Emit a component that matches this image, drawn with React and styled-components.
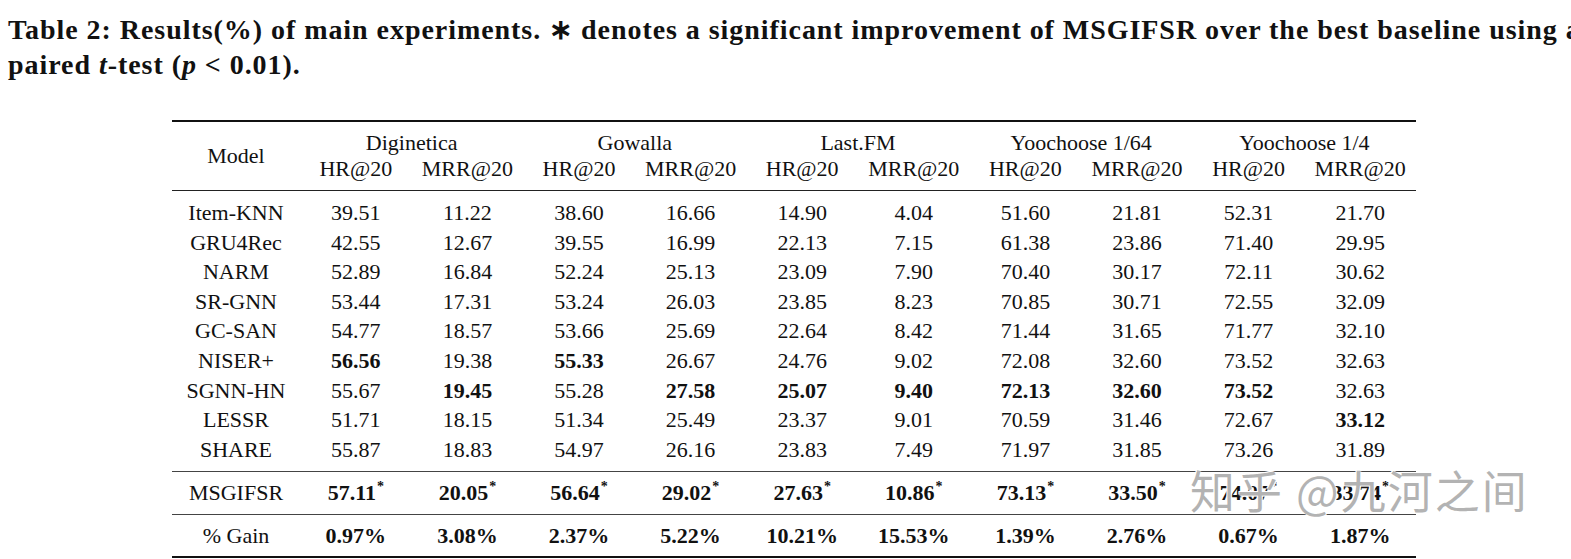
import React from 'react';
import styled, { createGlobalStyle } from 'styled-components';

const GlobalStyle = createGlobalStyle`
	html, body {
		margin: 0;
		padding: 0;
		background: #ffffff;
		overflow: hidden;
	}
	body {
		width: 1571px;
		height: 559px;
		font-family: 'Liberation Serif', 'Times New Roman', serif;
		color: #111111;
	}
`;

const datasets = ['Diginetica', 'Gowalla', 'Last.FM', 'Yoochoose 1/64', 'Yoochoose 1/4'];

// b marks a bold (best baseline) value
const baselines = [
	{ name: 'Item-KNN', values: ['39.51', '11.22', '38.60', '16.66', '14.90', '4.04', '51.60', '21.81', '52.31', '21.70'], b: [] },
	{ name: 'GRU4Rec', values: ['42.55', '12.67', '39.55', '16.99', '22.13', '7.15', '61.38', '23.86', '71.40', '29.95'], b: [] },
	{ name: 'NARM', values: ['52.89', '16.84', '52.24', '25.13', '23.09', '7.90', '70.40', '30.17', '72.11', '30.62'], b: [] },
	{ name: 'SR-GNN', values: ['53.44', '17.31', '53.24', '26.03', '23.85', '8.23', '70.85', '30.71', '72.55', '32.09'], b: [] },
	{ name: 'GC-SAN', values: ['54.77', '18.57', '53.66', '25.69', '22.64', '8.42', '71.44', '31.65', '71.77', '32.10'], b: [] },
	{ name: 'NISER+', values: ['56.56', '19.38', '55.33', '26.67', '24.76', '9.02', '72.08', '32.60', '73.52', '32.63'], b: [0, 2] },
	{ name: 'SGNN-HN', values: ['55.67', '19.45', '55.28', '27.58', '25.07', '9.40', '72.13', '32.60', '73.52', '32.63'], b: [1, 3, 4, 5, 6, 7, 8] },
	{ name: 'LESSR', values: ['51.71', '18.15', '51.34', '25.49', '23.37', '9.01', '70.59', '31.46', '72.67', '33.12'], b: [9] },
	{ name: 'SHARE', values: ['55.87', '18.83', '54.97', '26.16', '23.83', '7.49', '71.97', '31.85', '73.26', '31.89'], b: [] },
];

const ours = ['57.11', '20.05', '56.64', '29.02', '27.63', '10.86', '73.13', '33.50', '74.07', '33.74'];
const gains = ['0.97%', '3.08%', '2.37%', '5.22%', '10.21%', '15.53%', '1.39%', '2.76%', '0.67%', '1.87%'];

const Page = styled.div`
	position: relative;
	padding-top: 12px;
`;

const Caption = styled.p`
	margin: 0;
	padding-left: 8px;
	font-size: 28px;
	line-height: 35px;
	font-weight: 700;
	white-space: nowrap;
	letter-spacing: 0.95px;
`;

const Table = styled.table`
	margin: 38px 0 0 172px;
	width: 1244px;
	border-collapse: collapse;
	table-layout: fixed;
	font-size: 22px;
	text-align: center;
	border-top: 2px solid #111;
	border-bottom: 2.5px solid #111;
`;

const ModelCol = styled.col`
	width: 128px;
`;

const DataCol = styled.col`
	width: 111.6px;
`;

const HeadCell = styled.th`
	font-weight: 400;
	padding: 0;
	height: 34px;
	vertical-align: ${(p) => (p.$top ? 'bottom' : 'top')};
	line-height: 26px;
`;

const Head = styled.thead`
	border-bottom: 1.5px solid #222;
`;

const Body = styled.tbody`
	border-bottom: 1.5px solid #444;
	& > tr:first-child > td {
		padding-top: 7px;
	}
	& > tr:last-child > td {
		padding-bottom: 7px;
	}
`;

const Cell = styled.td`
	padding: 0;
	height: 29.6px;
	line-height: 29.6px;
	font-weight: ${(p) => (p.$bold ? 700 : 400)};
`;

const FootRow = styled.tr`
	border-bottom: ${(p) => (p.$ruled ? '1.5px solid #444' : 'none')};
`;

const FootCell = styled.td`
	padding: 0;
	height: 41.5px;
	line-height: 41.5px;
	font-weight: ${(p) => (p.$bold ? 700 : 400)};
`;

const Star = styled.sup`
	font-size: 14px;
	font-weight: 700;
	line-height: 0;
	vertical-align: 9px;
	margin-left: 1px;
`;

const Watermark = styled.div`
	position: absolute;
	left: 1190px;
	top: 462px;
	font-family: 'Noto Sans CJK SC', sans-serif;
	font-size: 45px;
	line-height: 56px;
	letter-spacing: 2px;
	color: rgba(165, 165, 165, 0.85);
	text-shadow: 0 0 2px #fff, 1px 1px 0 #fff, -1px -1px 0 #fff;
	white-space: nowrap;
	pointer-events: none;
`;

export default function App() {
	return (
		<Page>
			<GlobalStyle />
			<Caption>
				Table 2: Results(%) of main experiments. ∗ denotes a significant improvement of MSGIFSR over the best baseline using a
				<br />
				paired <i>t</i>-test (<i>p</i> &lt; 0.01).
			</Caption>
			<Table>
				<colgroup>
					<ModelCol />
					{gains.map((g) => (
						<DataCol key={g} />
					))}
				</colgroup>
				<Head>
					<tr>
						<HeadCell $top rowSpan={2} style={{ verticalAlign: 'middle' }}>
							Model
						</HeadCell>
						{datasets.map((d) => (
							<HeadCell $top key={d} colSpan={2}>
								{d}
							</HeadCell>
						))}
					</tr>
					<tr>
						{datasets.map((d) => (
							<React.Fragment key={d}>
								<HeadCell>HR@20</HeadCell>
								<HeadCell>MRR@20</HeadCell>
							</React.Fragment>
						))}
					</tr>
				</Head>
				<Body>
					{baselines.map((row) => (
						<tr key={row.name}>
							<Cell>{row.name}</Cell>
							{row.values.map((v, i) => (
								<Cell key={i} $bold={row.b.includes(i)}>
									{v}
								</Cell>
							))}
						</tr>
					))}
				</Body>
				<tbody>
					<FootRow $ruled>
						<FootCell>MSGIFSR</FootCell>
						{ours.map((v, i) => (
							<FootCell key={i} $bold>
								{v}
								<Star>*</Star>
							</FootCell>
						))}
					</FootRow>
					<FootRow>
						<FootCell>% Gain</FootCell>
						{gains.map((v, i) => (
							<FootCell key={i} $bold>
								{v}
							</FootCell>
						))}
					</FootRow>
				</tbody>
			</Table>
			<Watermark>知乎 @九河之间</Watermark>
		</Page>
	);
}
